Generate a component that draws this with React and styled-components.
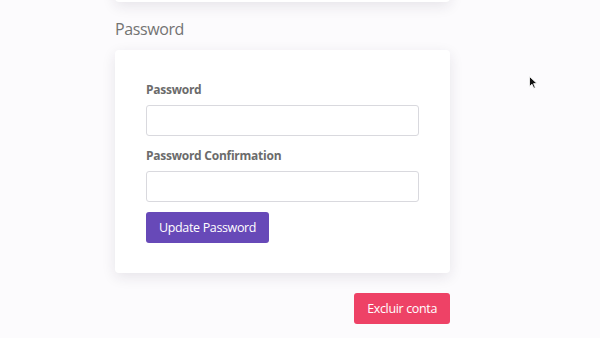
import styled, { createGlobalStyle } from 'styled-components';

const GlobalStyle = createGlobalStyle`
    html, body {
        margin: 0;
        padding: 0;
        background: #fcfbfd;
        font-family: 'Open Sans', 'Noto Sans', sans-serif;
        overflow: hidden;
    }
`;

const Page = styled.div`
    width: 600px;
    height: 338px;
    position: relative;
`;

const Column = styled.div`
    width: 335px;
    margin-left: 115px;
    display: flex;
    flex-direction: column;
`;

const Card = styled.div`
    background: #fff;
    border-radius: 4px;
    box-shadow: 0 4px 14px rgba(40, 30, 60, 0.1);
`;

const PrevCard = styled(Card)`
    height: 42px;
    margin-top: -40px;
`;

const SectionTitle = styled.h2`
    margin: 16px 0 0;
    height: 32px;
    font-size: 16px;
    font-weight: 400;
    letter-spacing: -0.4px;
    color: #737373;
    line-height: 22px;
`;

const FormCard = styled(Card)`
    padding: 30px 31px 30px;
    display: flex;
    flex-direction: column;
`;

const Label = styled.label`
    display: block;
    height: 20px;
    font-size: 12px;
    font-weight: 700;
    letter-spacing: -0.25px;
    color: #6b6b6b;
    line-height: 20px;
    margin-bottom: 5px;
`;

const Input = styled.input`
    display: block;
    width: 273px;
    height: 31px;
    box-sizing: border-box;
    border: 1px solid #d9d9de;
    border-radius: 3px;
    background: #fff;
    margin: 0 0 10px;
    outline: none;
`;

const Button = styled.button`
    align-self: flex-start;
    height: 31px;
    padding: 0 13px;
    border: none;
    border-radius: 3px;
    background: ${(p) => p.$bg};
    color: #fff;
    font-family: 'Open Sans', 'Noto Sans', sans-serif;
    font-size: 12.5px;
    letter-spacing: -0.35px;
    line-height: 31px;
`;

const Footer = styled.div`
    display: flex;
    justify-content: flex-end;
    margin-top: 20px;
`;

const Cursor = styled.svg`
    position: absolute;
    left: 529px;
    top: 76px;
`;

export default function App() {
    return (
        <Page>
            <GlobalStyle />
            <Column>
                <PrevCard />
                <SectionTitle>Password</SectionTitle>
                <FormCard>
                    <Label>Password</Label>
                    <Input type="password" />
                    <Label>Password Confirmation</Label>
                    <Input type="password" />
                    <Button $bg="#6749b8">Update Password</Button>
                </FormCard>
                <Footer>
                    <Button $bg="#ee4266">Excluir conta</Button>
                </Footer>
            </Column>
            <Cursor width="9" height="13" viewBox="0 0 9 13">
                <path d="M0.5 0.5 L0.5 10.5 L3 8.2 L4.8 12.3 L6.3 11.6 L4.6 7.6 L8 7.6 Z" fill="#111" stroke="#fff" strokeWidth="0.8" />
            </Cursor>
        </Page>
    );
}
